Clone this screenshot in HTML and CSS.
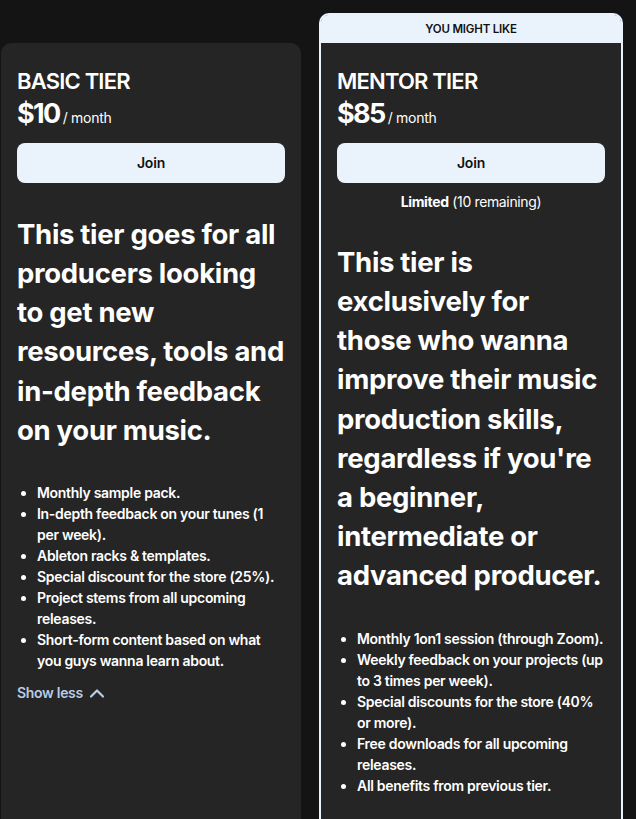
FILE: index.html
```html
<!DOCTYPE html>
<html lang="en">
<head>
<meta charset="utf-8">
<title>Tiers</title>
<link rel="stylesheet" href="styles.css">
</head>
<body>
<div class="row">
  <section class="card card-basic">
    <div class="card-body">
      <h2 class="tier-name">BASIC TIER</h2>
      <div class="price"><span class="amount">$10</span><span class="period">/ month</span></div>
      <button class="join">Join</button>
      <p class="desc">This tier goes for all producers looking to get new resources, tools and in-depth feedback on your music.</p>
      <ul class="benefits">
        <li>Monthly sample pack.</li>
        <li>In-depth feedback on your tunes (1 per week).</li>
        <li>Ableton racks &amp; templates.</li>
        <li>Special discount for the store (25%).</li>
        <li>Project stems from all upcoming releases.</li>
        <li>Short-form content based on what you guys wanna learn about.</li>
      </ul>
      <a class="toggle" href="#">Show less
        <svg class="chev" width="16" height="12" viewBox="0 0 16 12" aria-hidden="true"><path d="M2 9.5 L8 3.5 L14 9.5" fill="none" stroke="currentColor" stroke-width="2.2" stroke-linecap="round" stroke-linejoin="round"/></svg>
      </a>
    </div>
  </section>
  <section class="card card-featured">
    <div class="badge">YOU MIGHT LIKE</div>
    <div class="card-body">
      <h2 class="tier-name">MENTOR TIER</h2>
      <div class="price"><span class="amount">$85</span><span class="period">/ month</span></div>
      <button class="join">Join</button>
      <p class="limited"><strong>Limited</strong> (10 remaining)</p>
      <p class="desc">This tier is exclusively for those who wanna improve their music production skills, regardless if you're a beginner, intermediate or advanced producer.</p>
      <ul class="benefits">
        <li>Monthly 1on1 session (through Zoom).</li>
        <li>Weekly feedback on your projects (up to 3 times per week).</li>
        <li>Special discounts for the store (40% or more).</li>
        <li>Free downloads for all upcoming releases.</li>
        <li>All benefits from previous tier.</li>
      </ul>
    </div>
  </section>
</div>
</body>
</html>
```
FILE: styles.css
```css
* { box-sizing: border-box; }
html, body {
  margin: 0;
  padding: 0;
  background: #141414;
  height: 100%;
  overflow: hidden;
}
body {
  font-family: Inter, "Noto Sans", sans-serif;
  color: #ffffff;
}
.row {
  display: flex;
  align-items: stretch;
  gap: 18px;
  padding: 13px 0 0 1px;
  min-height: 900px;
}
.card {
  width: 300px;
  background: #252525;
  border-radius: 10px;
  flex: none;
}
.card-basic {
  margin-top: 30px;
}
.card-featured {
  width: 304px;
  border: 2px solid #eaf3fc;
}
.badge {
  height: 28px;
  padding-bottom: 1px;
  background: #eaf3fc;
  color: #111;
  font-size: 11.5px;
  font-weight: 600;
  letter-spacing: -0.2px;
  display: flex;
  align-items: center;
  justify-content: center;
  border-radius: 7px 7px 0 0;
}
.card-body {
  padding: 25px 16px 24px;
}
.tier-name {
  margin: 0;
  font-size: 22px;
  font-weight: 600;
  letter-spacing: -0.8px;
  line-height: 1.2;
}
.price {
  display: flex;
  align-items: baseline;
  gap: 3px;
  margin-top: 4px;
}
.amount {
  font-size: 27px;
  font-weight: 700;
  letter-spacing: -1.6px;
  line-height: 1.2;
}
.period {
  font-size: 14px;
  font-weight: 400;
  letter-spacing: -0.3px;
}
.join {
  display: block;
  width: 100%;
  height: 40px;
  margin-top: 12px;
  border: 0;
  border-radius: 8px;
  background: #eaf3fc;
  color: #111;
  font-family: inherit;
  font-size: 14px;
  font-weight: 600;
  letter-spacing: -0.2px;
}
.limited {
  margin: 9px 0 0;
  text-align: center;
  font-size: 14px;
  line-height: 20px;
  letter-spacing: -0.35px;
}
.limited strong { font-weight: 700; }
.desc {
  margin: 32px 0 0;
  font-size: 27.5px;
  font-weight: 700;
  line-height: 39.2px;
  letter-spacing: -0.3px;
}
.card-featured .desc { margin-top: 31px; }
.benefits {
  margin: 32px 0 0;
  padding-left: 20px;
  font-size: 14px;
  font-weight: 600;
  line-height: 21px;
  letter-spacing: -0.3px;
}
.card-featured .benefits { margin-top: 32px; }
.toggle {
  display: inline-flex;
  align-items: center;
  gap: 6px;
  margin-top: 13px;
  color: #b8cde6;
  font-size: 14px;
  font-weight: 600;
  letter-spacing: -0.3px;
  text-decoration: none;
}
.chev { display: block; }
```
